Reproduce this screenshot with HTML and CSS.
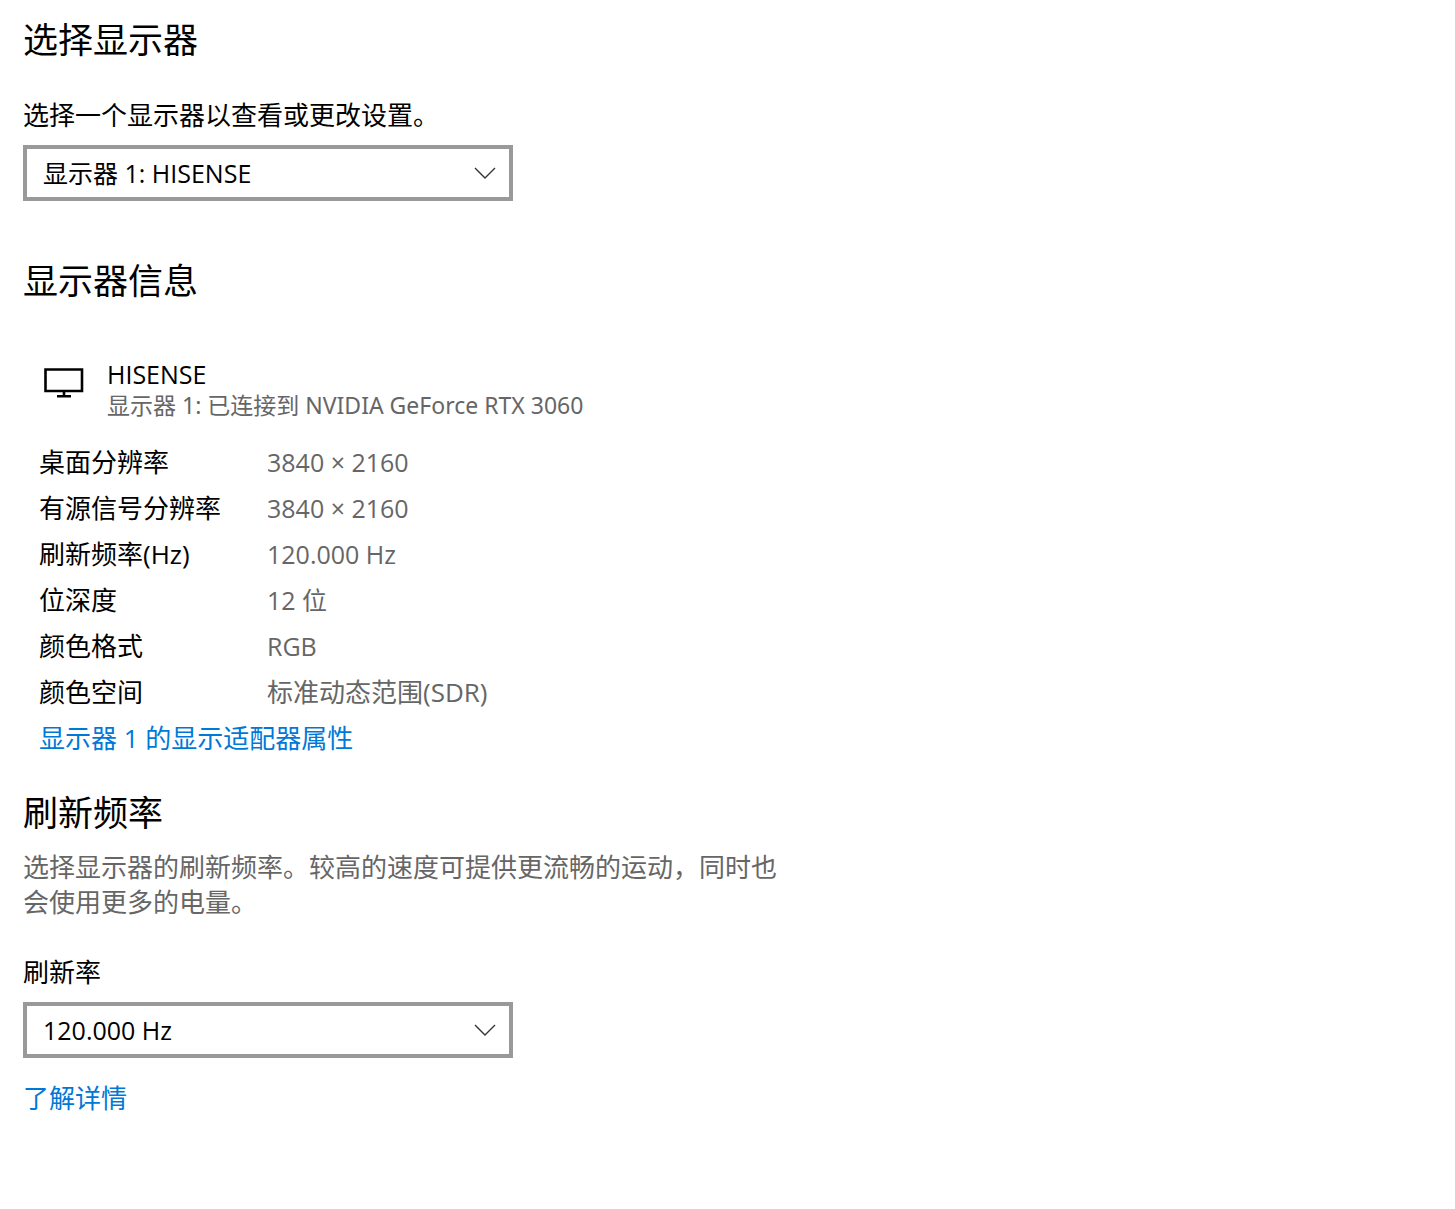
FILE: index.html
```html
<!DOCTYPE html>
<html lang="zh-CN">
<head>
<meta charset="utf-8">
<meta name="viewport" content="width=device-width, initial-scale=1">
<title>高级显示设置</title>
<link rel="stylesheet" href="styles.css">
</head>
<body>
<main class="page">
  <section class="section">
    <h2 class="title">选择显示器</h2>
    <div class="field field-display">
      <label class="label" for="display">选择一个显示器以查看或更改设置。</label>
      <div class="combo">
        <select class="combo-select" id="display"><option>显示器 1: HISENSE</option></select>
        <svg class="combo-arrow" viewBox="0 0 22 12" aria-hidden="true"><path d="M1 1l10 10L21 1"/></svg>
      </div>
    </div>
  </section>

  <section class="section section-info">
    <h2 class="title">显示器信息</h2>
    <div class="device">
      <svg class="device-icon" viewBox="0 0 40 30" aria-hidden="true"><path d="M1.5 1.5h36.5v21.5h-36.5zM20 23v5M13 28.3h14"/></svg>
      <div class="device-text">
        <p class="device-name">HISENSE</p>
        <p class="device-detail">显示器 1: 已连接到 NVIDIA GeForce RTX 3060</p>
      </div>
    </div>
    <table class="specs">
      <tbody>
        <tr><th scope="row">桌面分辨率</th><td class="numeric">3840 × 2160</td></tr>
        <tr><th scope="row">有源信号分辨率</th><td class="numeric">3840 × 2160</td></tr>
        <tr><th scope="row">刷新频率(Hz)</th><td class="numeric">120.000 Hz</td></tr>
        <tr><th scope="row">位深度</th><td class="numeric">12 位</td></tr>
        <tr><th scope="row">颜色格式</th><td class="numeric">RGB</td></tr>
        <tr><th scope="row">颜色空间</th><td>标准动态范围(SDR)</td></tr>
      </tbody>
    </table>
    <a class="link link-adapter" href="#adapter">显示器 1 的显示适配器属性</a>
  </section>

  <section class="section section-refresh">
    <h2 class="title">刷新频率</h2>
    <p class="description">选择显示器的刷新频率。较高的速度可提供更流畅的运动，同时也会使用更多的电量。</p>
    <div class="field field-rate">
      <label class="label" for="rate">刷新率</label>
      <div class="combo">
        <select class="combo-select" id="rate"><option>120.000 Hz</option></select>
        <svg class="combo-arrow" viewBox="0 0 22 12" aria-hidden="true"><path d="M1 1l10 10L21 1"/></svg>
      </div>
    </div>
    <a class="link link-more" href="#more">了解详情</a>
  </section>
</main>
</body>
</html>
```

FILE: styles.css
```css
* {
  box-sizing: border-box;
}

body {
  margin: 0;
  background: #fff;
  color: #000;
  font-family: "Open Sans", "Noto Sans CJK SC", sans-serif;
  font-size: 26px;
  line-height: 36px;
}

.page {
  max-width: 814px;
  padding: 16px 23px 92px;
}

.section {
  display: flex;
  flex-direction: column;
  align-items: flex-start;
}

.section-info {
  margin-top: 56px;
}

.section-refresh {
  margin-top: 28px;
}

.title {
  margin: 0;
  font-size: 35px;
  font-weight: 400;
  line-height: 48px;
}

.field {
  display: flex;
  flex-direction: column;
  gap: 12px;
  width: 100%;
}

.field-display {
  margin-top: 33px;
}

.field-rate {
  margin-top: 34px;
}

/* The select and its arrow share one grid cell. */
.combo {
  display: grid;
  align-items: center;
  width: 100%;
  max-width: 490px;
}

.combo-select {
  grid-area: 1 / 1;
  width: 100%;
  height: 56px;
  margin: 0;
  padding: 0 48px 0 16px;
  border: 4px solid #999;
  border-radius: 0;
  background: #fff;
  color: #000;
  font-family: inherit;
  font-size: 25px;
  appearance: none;
}

.combo-arrow {
  grid-area: 1 / 1;
  justify-self: end;
  width: 22px;
  height: 12px;
  margin-right: 17px;
  fill: none;
  stroke: #333;
  stroke-width: 1.4;
  pointer-events: none;
}

.device {
  display: flex;
  gap: 23px;
  margin-top: 53px;
  padding-left: 21px;
}

.device-icon {
  flex: none;
  width: 40px;
  height: 30px;
  margin-top: 10px;
  fill: none;
  stroke: #000;
  stroke-width: 2.6;
}

.device-name,
.device-detail {
  margin: 0;
}

.device-name {
  font-size: 25px;
  line-height: 32px;
}

.device-detail {
  color: #666;
  font-family: "Noto Sans", "Noto Sans CJK SC", sans-serif;
  font-size: 23px;
  line-height: 30px;
}

.specs {
  margin: 19px 0 0 16px;
  border-collapse: collapse;
  line-height: 46px;
}

.specs th,
.specs td {
  padding: 0;
  font-weight: 400;
  text-align: left;
}

.specs th {
  width: 228px;
}

.specs td {
  color: #666;
}

.specs .numeric {
  font-size: 25px;
}

.link {
  color: #0078d7;
  text-decoration: none;
}

.link-adapter {
  margin-left: 16px;
  line-height: 46px;
}

.link-more {
  margin-top: 22px;
}

.description {
  margin: 13px 0 0;
  color: #666;
  line-height: 35px;
}
```
